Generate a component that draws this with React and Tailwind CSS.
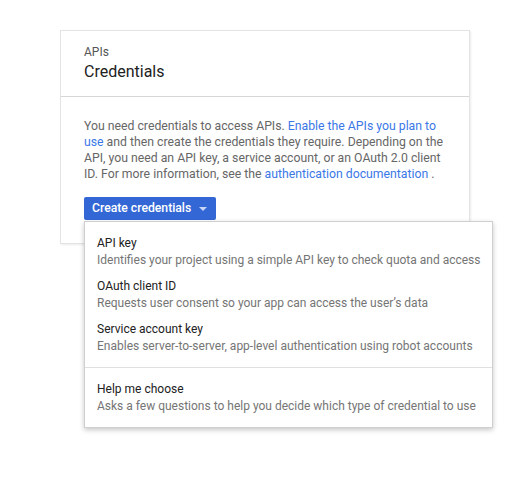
import React from "react";

const items = [
  { t: "API key", d: "Identifies your project using a simple API key to check quota and access" },
  { t: "OAuth client ID", d: "Requests user consent so your app can access the user’s data" },
  { t: "Service account key", d: "Enables server-to-server, app-level authentication using robot accounts" },
];

function Item({ t, d }) {
  return (
    <div className="px-3 py-[4.5px] whitespace-nowrap">
      <div className="text-[12px] leading-[17px] text-[#212121]">{t}</div>
      <div className="text-[12px] leading-[17px] text-[#757575]">{d}</div>
    </div>
  );
}

export default function App() {
  return (
    <div className="min-h-[486px] w-[522px] bg-white pl-[60px] pt-[30px]" style={{ fontFamily: "Roboto, 'Liberation Sans', sans-serif" }}>
      <div className="w-[410px] h-[214px] border border-[#e3e3e3] shadow-[1px_1px_2px_rgba(0,0,0,0.08)] bg-white">
        <div className="pl-[23px] pr-6 pt-[13px] pb-[12px] border-b border-[#d6d6d6]">
          <div className="text-[12px] leading-[16px] text-[#555555]">APIs</div>
          <div className="text-[16px] leading-[24px] text-[#212121]">Credentials</div>
        </div>
        <div className="pl-[23px] pr-[20px] pt-[21px]">
          <p className="text-[12.25px] leading-[16px] text-[#666666]">
            You need credentials to access APIs.{" "}
            <span className="text-[#3b78e7]">Enable the APIs you plan to use</span> and then create the credentials they
            require. Depending on the API, you need an API key, a service account, or an OAuth 2.0 client ID. For more
            information, see the <span className="text-[#3b78e7]">authentication documentation</span> .
          </p>
          <div className="relative mt-[15px] inline-block">
            <div className="flex h-[23px] items-center rounded-[2px] bg-[#3367d6] pl-[8px] pr-[9px] text-[12.2px] font-medium text-white">
              <span>Create credentials</span>
              <svg className="ml-[8px]" width="8" height="4" viewBox="0 0 8 4">
                <path d="M0 0h8L4 4z" fill="#c9d6f3" />
              </svg>
            </div>
            <div className="absolute left-0 top-[24px] z-10 w-[409px] border border-[#cfcfcf] bg-white pt-2 pb-2 shadow-[0_2px_5px_rgba(0,0,0,0.22)]">
              {items.map((i) => (
                <Item key={i.t} {...i} />
              ))}
              <div className="my-2 border-t border-[#e0e0e0]" />
              <Item t="Help me choose" d="Asks a few questions to help you decide which type of credential to use" />
            </div>
          </div>
        </div>
      </div>
    </div>
  );
}
